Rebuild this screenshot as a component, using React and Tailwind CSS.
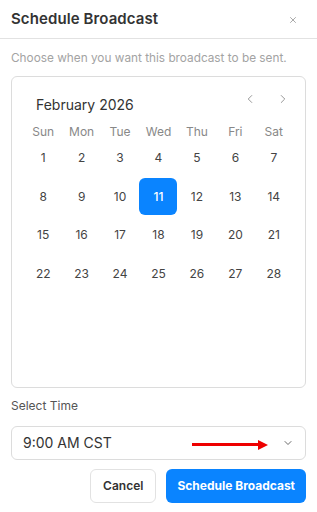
import { ChevronLeft, ChevronRight, ChevronDown, X } from 'lucide-react'

const weekdays = ['Sun', 'Mon', 'Tue', 'Wed', 'Thu', 'Fri', 'Sat']
const days = Array.from({ length: 28 }, (_, i) => i + 1)

function App() {
  return (
    <div className="w-[317px] h-[512px] bg-white text-[#333] font-['Inter',sans-serif] overflow-hidden">
      {/* header */}
      <div className="flex items-center justify-between h-[39px] px-[11px] border-b border-[#e2e2e2]">
        <h1 className="text-[15px] font-semibold tracking-[0.1px]">Schedule Broadcast</h1>
        <X size={10} strokeWidth={2} className="text-[#999] mr-[8px] mt-[2px]" />
      </div>

      <div className="px-[11px]">
        <p className="text-[11.8px] text-[#a3a3a3] mt-[11px] leading-[16px]">Choose when you want this broadcast to be sent.</p>

        {/* calendar */}
        <div className="mt-[10px] border border-[#dcdcdc] rounded-[6px] px-3 pb-[55px]">
          <div className="flex items-start justify-between pt-[12px] mb-[11px]">
            <span className="mt-[6px] ml-[12px] text-[14px] leading-[20px] text-[#333]">February 2026</span>
            <div className="flex gap-[13px]">
              <button className="w-5 h-5 flex items-center justify-center text-[#777]"><ChevronLeft size={14} strokeWidth={1.3} /></button>
              <button className="w-5 h-5 flex items-center justify-center text-[#777]"><ChevronRight size={14} strokeWidth={1.3} /></button>
            </div>
          </div>
          <div className="grid grid-cols-7 text-[12px] leading-[12px] text-[#888] text-center">
            {weekdays.map(d => <div key={d}>{d}</div>)}
          </div>
          <div className="grid grid-cols-7 auto-rows-[38.5px] text-[12px] text-[#444] mt-px">
            {days.map(d => (
              <div key={d} className="flex items-center justify-center">
                {d === 11
                  ? <span className="w-[38px] h-[37px] rounded-[6px] bg-[#0a84ff] text-white flex items-center justify-center font-medium">{d}</span>
                  : d}
              </div>
            ))}
            <div className="col-span-7"></div>
          </div>
        </div>

        <p className="text-[12px] text-[#555] mt-[10px] leading-[16px]">Select Time</p>

        <div className="mt-[12px] h-[34px] border border-[#dcdcdc] rounded-[6px] flex items-center pl-[11px] pr-[11px] relative">
          <span className="text-[14px] text-[#333]">9:00 AM CST</span>
          <div className="absolute left-[180px] top-[13px] flex items-center">
            <div className="w-[66px] h-[3px] bg-[#ee0000]"></div>
            <div className="w-0 h-0 border-y-[5px] border-y-transparent border-l-[10px] border-l-[#ee0000]"></div>
          </div>
          <ChevronDown size={12} strokeWidth={1.6} className="ml-auto text-[#444]" />
        </div>

        <div className="flex justify-end gap-[10px] mt-[9px]">
          <button className="h-[34px] px-[12px] border border-[#e2e2e2] rounded-[6px] text-[12px] font-semibold text-[#333]">Cancel</button>
          <button className="h-[34px] px-[11px] rounded-[6px] bg-[#0a84ff] text-[12px] font-bold text-white">Schedule Broadcast</button>
        </div>
      </div>
    </div>
  )
}

export default App
